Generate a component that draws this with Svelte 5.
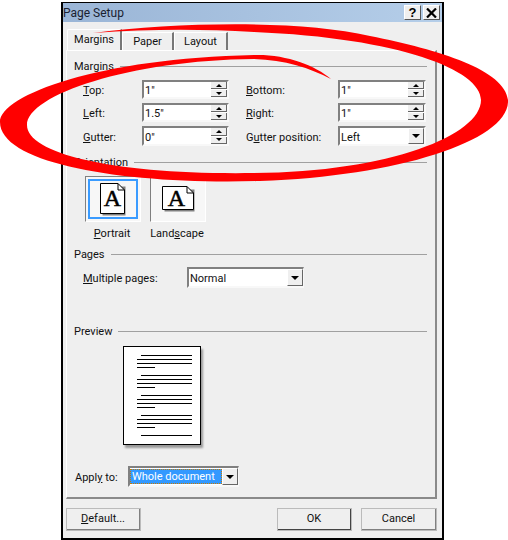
<script>
  const marginRows = [
    { key: "T", rest: "op:", value: '1"', key2: "B", rest2: "ottom:", value2: '1"' },
    { key: "L", rest: "eft:", value: '1.5"', key2: "R", rest2: "ight:", value2: '1"' },
  ];
  const paragraphs = [0, 1, 2, 3];
</script>

<div class="window">
  <div class="titlebar">
    <span class="title">Page Setup</span>
    <button class="caption">?</button>
    <button class="caption close" aria-label="Close">
      <svg width="11" height="10" viewBox="0 0 11 10"><path d="M1 0.5 L10 9.5 M10 0.5 L1 9.5" stroke="#000" stroke-width="2.2" /></svg>
    </button>
  </div>

  <div class="tabs">
    <div class="tab active">Margins</div>
    <div class="tab paper">Paper</div>
    <div class="tab layout">Layout</div>
  </div>

  <div class="panel">
    <div class="head"><span>Margins</span><i></i></div>
    <div class="grid">
      {#each marginRows as row}
        <span class="lbl"><u>{row.key}</u>{row.rest}</span>
        <div class="field"><span class="val">{row.value}</span><div class="spin"><b><em class="up"></em></b><b><em class="down"></em></b></div></div>
        <span class="lbl"><u>{row.key2}</u>{row.rest2}</span>
        <div class="field"><span class="val">{row.value2}</span><div class="spin"><b><em class="up"></em></b><b><em class="down"></em></b></div></div>
      {/each}
      <span class="lbl"><u>G</u>utter:</span>
      <div class="field tall"><span class="val">0"</span><div class="spin"><b><em class="up"></em></b><b><em class="down"></em></b></div></div>
      <span class="lbl">G<u>u</u>tter position:</span>
      <div class="field tall"><span class="val">Left</span><div class="drop"><em class="down"></em></div></div>
    </div>

    <div class="head orient"><span>Orientation</span><i></i></div>
    <div class="orients">
      <div class="choice">
        <div class="iconbtn selected">
          <svg width="26" height="33" viewBox="0 0 26 33">
            <path d="M2.5 3.5 H25.5 V32.5 H2.5 Z" fill="#808080" />
            <path d="M0.5 0.5 H18 L24.5 7 V30.5 H0.5 Z" fill="#fff" stroke="#000" />
            <path d="M18 0.5 V7 H24.5" fill="none" stroke="#000" />
            <text x="12.5" y="22.5" text-anchor="middle" class="glyph">A</text>
          </svg>
        </div>
        <span class="cap"><u>P</u>ortrait</span>
      </div>
      <div class="choice">
        <div class="iconbtn">
          <svg width="33" height="26" viewBox="0 0 33 26">
            <path d="M2.5 3.5 H32.5 V25.5 H2.5 Z" fill="#808080" />
            <path d="M0.5 0.5 H25 L31.5 7 V23.5 H0.5 Z" fill="#fff" stroke="#000" />
            <path d="M25 0.5 V7 H31.5" fill="none" stroke="#000" />
            <text x="14.5" y="19.5" text-anchor="middle" class="glyph">A</text>
          </svg>
        </div>
        <span class="cap">Land<u>s</u>cape</span>
      </div>
    </div>

    <div class="head pages"><span>Pages</span><i></i></div>
    <div class="multi">
      <span class="lbl"><u>M</u>ultiple pages:</span>
      <div class="field select"><span class="val">Normal</span><div class="drop"><em class="down"></em></div></div>
    </div>

    <div class="head previewhead"><span>Preview</span><i></i></div>
    <div class="sheet">
      {#each paragraphs as p}
        <div class="para">
          <i class="ln first"></i><i class="ln"></i><i class="ln"></i><i class="ln short"></i>
        </div>
      {/each}
      <i class="ln first"></i>
    </div>

    <div class="apply">
      <span class="lbl">Appl<u>y</u> to:</span>
      <div class="field applysel">
        <span class="val hl">Whole document</span>
        <div class="drop"><em class="down"></em></div>
      </div>
    </div>
  </div>

  <div class="buttons">
    <button class="btn"><u>D</u>efault...</button>
    <span class="spacer"></span>
    <button class="btn ok">OK</button>
    <button class="btn cancel">Cancel</button>
  </div>
</div>

<svg class="scribble" width="508" height="540" viewBox="0 0 508 540">
  <path fill="#ff0000" d="M93 33 C180 22 300 20 370 36 C440 50 505 70 508 100 C510 140 400 176 260 181 C130 185 0 165 0 122 C0 95 100 58 254 55 C285 54 315 65 331 79 C310 68 285 60 254 59 C130 60 27 95 27 125 C27 155 120 175 254 173 C390 172 481 135 481 100 C481 70 400 38 254 32 C200 29 150 29 93 33 Z" />
</svg>

<style>
  :global(body) {
    margin: 0;
    background: #fff;
    overflow: hidden;
  }
  .window {
    box-sizing: border-box;
    width: 383px;
    height: 538px;
    margin: 2px 0 0 61px;
    border: 2px solid #000;
    border-top-width: 1px;
    background: #efefef;
    font-family: Roboto, sans-serif;
    font-size: 11px;
    color: #111;
  }
  .titlebar {
    height: 19px;
    display: flex;
    align-items: center;
    padding: 0 2px 0 0;
    background: linear-gradient(90deg, #9ab5d6, #b5cee9);
  }
  .title {
    flex: 1;
    font-size: 12px;
    color: #1a2230;
  }
  .caption {
    box-sizing: border-box;
    width: 17px;
    height: 15px;
    margin-left: 2px;
    padding: 0;
    display: flex;
    align-items: center;
    justify-content: center;
    background: #efefef;
    border: 1px solid;
    border-color: #fff #555 #555 #fff;
    font: bold 13px "Liberation Sans", sans-serif;
    color: #000;
  }
  .tabs {
    display: flex;
    height: 28px;
    padding-left: 4px;
    align-items: flex-end;
  }
  .tab {
    box-sizing: border-box;
    height: 18px;
    text-align: center;
    line-height: 18px;
    border-left: 1px solid #fff;
    border-right: 2px solid #777;
    border-top: 1px solid #fff;
  }
  .tab.active {
    width: 55px;
    height: 21px;
    line-height: 20px;
    border-radius: 2px 0 0 0;
  }
  .tab.paper { width: 52px; }
  .tab.layout { width: 54px; }
  .panel {
    box-sizing: border-box;
    width: 371px;
    height: 449px;
    margin-left: 3px;
    padding: 8px 8px 0 7px;
    border: 1px solid;
    border-color: #fff #8a8a8a #8a8a8a #fff;
    border-right-width: 2px;
    border-bottom-width: 2px;
  }
  .head {
    display: flex;
    align-items: center;
    height: 14px;
    gap: 6px;
  }
  .head i {
    flex: 1;
    height: 1px;
    background: #a0a0a0;
  }
  .grid {
    display: grid;
    grid-template-columns: 59px 87px 17px 92px 88px;
    grid-template-rows: 19px 19px 20px;
    row-gap: 4px;
    margin: 7px 0 0 9px;
    align-items: center;
  }
  .grid > .lbl:nth-child(4n + 3) {
    grid-column: 4;
  }
  .lbl {
    padding-top: 2px;
  }
  .field {
    box-sizing: border-box;
    position: relative;
    height: 100%;
    display: flex;
    align-items: center;
    background: #fff;
    border: 2px solid;
    border-color: #808080 #f8f8f8 #f8f8f8 #808080;
  }
  .val {
    flex: 1;
    padding: 2px 0 0 1px;
    white-space: nowrap;
  }
  .spin {
    width: 16px;
    height: 100%;
    display: flex;
    flex-direction: column;
    gap: 1px;
  }
  .spin b {
    flex: 1;
    display: flex;
    align-items: center;
    justify-content: center;
    background: #efefef;
    border-bottom: 1px solid #666;
    border-right: 1px solid #666;
  }
  .drop {
    box-sizing: border-box;
    width: 16px;
    height: 100%;
    display: flex;
    align-items: center;
    justify-content: center;
    background: #efefef;
    border-bottom: 1px solid #666;
    border-right: 1px solid #666;
    border-top: 1px solid #fff;
    border-left: 1px solid #fff;
  }
  .up,
  .down {
    width: 0;
    height: 0;
    border-left: 3px solid transparent;
    border-right: 3px solid transparent;
  }
  .up { border-bottom: 3px solid #000; }
  .down { border-top: 3px solid #000; }
  .drop .down {
    border-left-width: 4px;
    border-right-width: 4px;
    border-top-width: 4px;
  }
  .head.orient { margin-top: 9px; }
  .orients {
    display: flex;
    margin: 7px 0 0 11px;
  }
  .choice {
    width: 65px;
    display: flex;
    flex-direction: column;
    align-items: flex-start;
  }
  .iconbtn {
    box-sizing: border-box;
    width: 56px;
    height: 46px;
    display: flex;
    align-items: center;
    justify-content: center;
    background: #f7f7f7;
    border: 1px solid;
    border-color: #808080 #fff #fff #808080;
  }
  .iconbtn.selected {
    outline: 2px solid #3a9bff;
    outline-offset: -5px;
  }
  .glyph {
    font-family: "Liberation Serif", serif;
    font-size: 24px;
    fill: #000;
    stroke: #000;
    stroke-width: 0.5;
  }
  .cap {
    align-self: stretch;
    margin: 5px 11px 0 0;
    height: 14px;
    line-height: 14px;
    text-align: center;
  }
  .head.pages { margin-top: 6px; }
  .multi {
    display: flex;
    align-items: center;
    margin: 6px 0 0 9px;
  }
  .multi .lbl { width: 104px; }
  .select {
    width: 117px;
    height: 21px;
    border-right-width: 1px;
  }
  .head.previewhead { margin-top: 36px; }
  .sheet {
    box-sizing: border-box;
    width: 78px;
    height: 99px;
    margin: 8px 0 0 49px;
    padding: 8px 8px 0 13px;
    background: #fff;
    border: 1px solid #000;
    box-shadow: 2px 3px 2px #999;
    display: flex;
    flex-direction: column;
  }
  .para {
    display: flex;
    flex-direction: column;
    margin-bottom: 7px;
  }
  .ln {
    display: block;
    height: 1px;
    margin-bottom: 3px;
    background: #000;
  }
  .ln.first { margin-left: 4px; }
  .ln.short {
    width: 18px;
    margin-bottom: 0;
  }
  .apply {
    display: flex;
    align-items: center;
    margin: 21px 0 0 1px;
  }
  .apply .lbl {
    width: 53px;
    padding-top: 2px;
  }
  .applysel {
    width: 111px;
    height: 21px;
    border-right-width: 1px;
  }
  .hl {
    box-sizing: border-box;
    background: #3399ff;
    color: #fff;
    height: 15px;
    line-height: 14px;
    padding: 1px 0 0 2px;
    outline: 1px dotted #c87a00;
    outline-offset: -1px;
  }
  .buttons {
    display: flex;
    margin: 9px 0 0 3px;
    width: 371px;
  }
  .spacer { flex: 1; }
  .btn {
    box-sizing: border-box;
    width: 75px;
    height: 23px;
    padding: 0 0 2px;
    margin-left: 9px;
    background: #efefef;
    border: 1px solid;
    border-color: #fff #808080 #808080 #fff;
    border-right-width: 2px;
    border-bottom-width: 2px;
    outline: 1px solid #bbb;
    outline-offset: -1px;
    font: inherit;
    color: #111;
  }
  .btn:first-child { margin-left: 0; }
  .btn.ok {
    border-color: #666 #444 #444 #666;
  }
  .btn.cancel { width: 76px; }
  .scribble {
    position: absolute;
    left: 0;
    top: 0;
    pointer-events: none;
  }
</style>
